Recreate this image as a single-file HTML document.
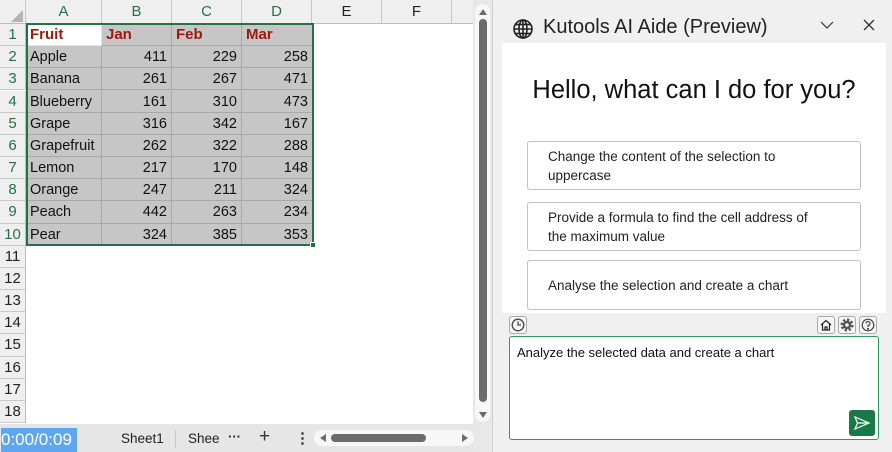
<!DOCTYPE html>
<html><head><style>
*{box-sizing:border-box;margin:0;padding:0}
body{width:892px;height:452px;overflow:hidden;background:#e6e6e6;font-family:"Liberation Sans",sans-serif;position:relative}
.a{position:absolute}
.ch{position:absolute;top:0;height:24px;background:#efefef;border-right:1px solid #c8c8c8;border-bottom:1px solid #bdbdbd;font-size:15px;color:#222;text-align:center;line-height:24px}
.rh{position:absolute;left:0;width:26px;background:#efefef;border-right:1px solid #bdbdbd;border-bottom:1px solid #c8c8c8;font-size:15px;color:#222;text-align:center}
.c{position:absolute;font-size:14.5px;color:#111;border-right:1px solid #a8a8a8;border-bottom:1px solid #a8a8a8;padding:0 4px;white-space:nowrap}
.r{text-align:right}
.h{color:#9a1a0e;font-weight:bold;font-size:15px}
.btn{position:absolute;left:527px;width:334px;border:1px solid #c2c2c2;border-radius:3px;background:#fff;font-size:13.5px;color:#222;padding-left:20px;line-height:19px;display:flex;align-items:center}
.ib{position:absolute;top:316px;width:18px;height:18px;border:1px solid #aaa;border-radius:3px;background:#f6f6f6}
</style></head><body>
<div class="a" style="left:0;top:0;width:473px;height:424px;background:#fff"></div>
<div class="ch" style="left:0;width:26px"></div>
<svg class="a" style="left:10px;top:9px" width="14" height="14"><polygon points="13,1 13,13 1,13" fill="#b4b4b4"/></svg>
<div class="ch" style="left:26px;width:76px;color:#217346">A</div>
<div class="ch" style="left:102px;width:70px;color:#217346">B</div>
<div class="ch" style="left:172px;width:70px;color:#217346">C</div>
<div class="ch" style="left:242px;width:70px;color:#217346">D</div>
<div class="ch" style="left:312px;width:70px">E</div>
<div class="ch" style="left:382px;width:70px">F</div>
<div class="ch" style="left:452px;width:21px;border-right:none"></div>
<div id="rows"></div>
<div class="a" style="left:26px;top:24px;width:287px;height:222px;background:#c6c6c6"></div>
<div class="a" style="left:26px;top:24px;width:76px;height:22px;background:#fff"></div>
<div id="cells"></div>
<div class="a" style="left:26px;top:23px;width:288px;height:223px;border:2px solid #217346"></div>
<div class="a" style="left:310px;top:242px;width:6px;height:6px;background:#217346;border:1px solid #fff"></div>
<div class="a" style="left:473px;top:0;width:19px;height:452px;background:#e8e8e8"></div>
<div class="a" style="left:475px;top:4px;width:15px;height:418px;background:#f7f7f7;border-radius:8px"></div>
<svg class="a" style="left:478px;top:8px" width="10" height="8"><polygon points="5,1 9,7 1,7" fill="#6b6b6b"/></svg>
<div class="a" style="left:479px;top:19px;width:8px;height:383px;background:#6b6b6b;border-radius:4px"></div>
<svg class="a" style="left:478px;top:411px" width="10" height="8"><polygon points="1,1 9,1 5,7" fill="#6b6b6b"/></svg>
<div class="a" style="left:0;top:424px;width:473px;height:28px;background:#e6e6e6"></div>
<div class="a" style="left:1px;top:428px;width:76px;height:24px;background:#5ea6f0;color:#fff;font-size:17px;line-height:24px">0:00/0:09</div>
<div class="a" style="left:121px;top:431px;font-size:13.5px;color:#222">Sheet1</div>
<div class="a" style="left:175px;top:430px;width:1px;height:18px;background:#c8c8c8"></div>
<div class="a" style="left:188px;top:431px;font-size:13.5px;color:#222">Shee</div>
<div class="a" style="left:228px;top:429px;font-size:13px;color:#222;font-weight:bold">···</div>
<div class="a" style="left:259px;top:426px;font-size:19px;color:#333">+</div>
<div class="a" style="left:295px;top:429px;font-size:15px;color:#333;font-weight:bold">⋮</div>
<div class="a" style="left:314px;top:430px;width:160px;height:16px;background:#f7f7f7;border-radius:8px"></div>
<svg class="a" style="left:319px;top:433px" width="8" height="10"><polygon points="7,1 7,9 1,5" fill="#6b6b6b"/></svg>
<div class="a" style="left:331px;top:434px;width:95px;height:8px;background:#6b6b6b;border-radius:4px"></div>
<svg class="a" style="left:461px;top:433px" width="8" height="10"><polygon points="1,1 1,9 7,5" fill="#6b6b6b"/></svg>
<div class="a" style="left:492px;top:0;width:400px;height:452px;background:#f0f0f0;border-left:1px solid #d0d0d0"></div>
<svg class="a" style="left:512px;top:18px" width="22" height="22" viewBox="0 0 22 22" fill="none" stroke="#222" stroke-width="1.6"><circle cx="11" cy="11" r="9"/><ellipse cx="11" cy="11" rx="4" ry="9"/><line x1="2" y1="11" x2="20" y2="11"/><line x1="3.5" y1="6.5" x2="18.5" y2="6.5"/><line x1="3.5" y1="15.5" x2="18.5" y2="15.5"/><line x1="11" y1="2" x2="11" y2="20"/></svg>
<div class="a" style="left:543px;top:16px;font-size:20px;color:#222">Kutools AI Aide (Preview)</div>
<svg class="a" style="left:820px;top:21px" width="14" height="9"><polyline points="1,1 7,7 13,1" fill="none" stroke="#333" stroke-width="1.2"/></svg>
<svg class="a" style="left:863px;top:19px" width="12" height="12"><path d="M1 1L11 11M11 1L1 11" stroke="#333" stroke-width="1.3"/></svg>
<div class="a" style="left:502px;top:43px;width:384px;height:270px;background:#fff"></div>
<div class="a" style="left:502px;top:76px;width:384px;text-align:center;font-size:25.5px;color:#111">Hello, what can I do for you?</div>
<div class="btn" style="top:141px;height:49px">Change the content of the selection to<br>uppercase</div>
<div class="btn" style="top:202px;height:49px">Provide a formula to find the cell address of<br>the maximum value</div>
<div class="btn" style="top:260px;height:50px">Analyse the selection and create a chart</div>
<div class="ib" style="left:509px"></div>
<svg class="a" style="left:511px;top:318px" width="14" height="14" fill="none" stroke="#444" stroke-width="1.3"><circle cx="7" cy="7" r="5.8"/><path d="M7 3.5V7H10"/></svg>
<div class="ib" style="left:817px"></div>
<svg class="a" style="left:819px;top:318px" width="14" height="14" fill="none" stroke="#222" stroke-width="1.2"><path d="M2 7L7 2.5L12 7M3.5 6V12H10.5V6M6 12V9H8V12"/></svg>
<div class="ib" style="left:838px"></div>
<svg class="a" style="left:839px;top:317px" width="16" height="16" viewBox="0 0 16 16"><circle cx="8" cy="8" r="5" fill="none" stroke="#555" stroke-width="3" stroke-dasharray="2.2 1.7"/><circle cx="8" cy="8" r="4.2" fill="#555"/><circle cx="8" cy="8" r="1.8" fill="#f6f6f6"/></svg>
<div class="ib" style="left:859px"></div>
<svg class="a" style="left:861px;top:318px" width="14" height="14" fill="none" stroke="#444" stroke-width="1.2"><circle cx="7" cy="7" r="5.8"/><path d="M5 5.5A2 2 0 1 1 7 7.5V9"/><circle cx="7" cy="10.8" r=".5" fill="#444"/></svg>
<div class="a" style="left:509px;top:336px;width:370px;height:104px;background:#fff;border:1px solid #2e9a5c;border-radius:3px"></div>
<div class="a" style="left:517px;top:345px;font-size:13px;color:#111">Analyze the selected data and create a chart</div>
<div class="a" style="left:849px;top:410px;width:26px;height:26px;background:#177a45;border-radius:3px"></div>
<svg class="a" style="left:853px;top:415px" width="18" height="16" fill="none" stroke="#fff" stroke-width="1.2"><path d="M2 2L16 8L2 14L4.5 8ZM4.5 8H16"/></svg>
<script>
var rs='';for(var i=1;i<=18;i++){var t=24+(i-1)*22.17;rs+='<div class="rh" style="top:'+t+'px;height:22.17px;line-height:22px;'+(i<=10?'color:#217346':'')+'">'+i+'</div>';}
document.getElementById('rows').innerHTML=rs;
var d=[['Fruit','Jan','Feb','Mar'],['Apple',411,229,258],['Banana',261,267,471],['Blueberry',161,310,473],['Grape',316,342,167],['Grapefruit',262,322,288],['Lemon',217,170,148],['Orange',247,211,324],['Peach',442,263,234],['Pear',324,385,353]];
var xs=[26,102,172,242],ws=[76,70,70,71],cs='';
d.forEach(function(r,i){var t=24+i*22.17;r.forEach(function(v,j){cs+='<div class="c'+(i==0?' h':(j>0?' r':''))+'" style="left:'+xs[j]+'px;top:'+t+'px;width:'+ws[j]+'px;height:22.17px;line-height:22px;'+(i==0&&j==0?'border-color:#e1e1e1;':'')+'">'+v+'</div>'})});
document.getElementById('cells').innerHTML=cs;
</script>
</body></html>
